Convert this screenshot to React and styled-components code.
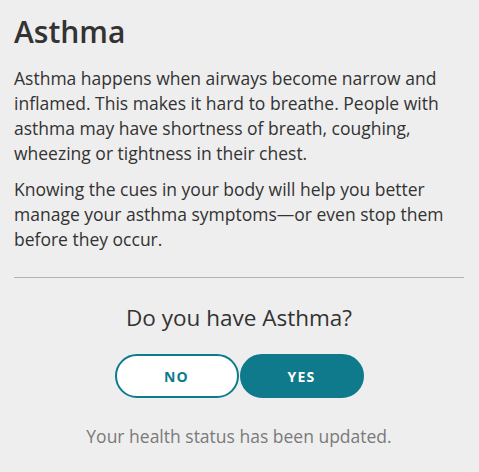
import React, {useState} from 'react'
import styled, {createGlobalStyle} from 'styled-components'

const GlobalStyle = createGlobalStyle`
  html, body {
    margin: 0;
    padding: 0;
    background: #eeeeee;
  }
  body {
    font-family: "Open Sans", "Liberation Sans", sans-serif;
    color: #333333;
  }
`

const App = () => {
  const [answer, setAnswer] = useState('yes')
  return (
    <>
      <GlobalStyle/>
      <Page>
        <Title>Asthma</Title>
        <Paragraph>
          Asthma happens when airways become narrow and inflamed. This makes it hard to breathe. People with
          asthma may have shortness of breath, coughing, wheezing or tightness in their chest.
        </Paragraph>
        <Paragraph>
          Knowing the cues in your body will help you better manage your asthma symptoms—or even stop them
          before they occur.
        </Paragraph>
        <Divider/>
        <Question>Do you have Asthma?</Question>
        <Toggle>
          <Choice active={answer === 'no'} onClick={() => setAnswer('no')}>NO</Choice>
          <Choice active={answer === 'yes'} onClick={() => setAnswer('yes')}>YES</Choice>
        </Toggle>
        <Status>Your health status has been updated.</Status>
      </Page>
    </>
  )
}

export default App

const Page = styled.div`
  width: 479px;
  height: 472px;
  box-sizing: border-box;
  padding: 12px 15px 0 14px;
  display: flex;
  flex-direction: column;
`

const Title = styled.h1`
  margin: 0 0 14px;
  font-size: 30px;
  font-weight: 600;
  line-height: 40px;
  color: #333333;
`

const Paragraph = styled.p`
  margin: 0 0 11px;
  font-size: 17.5px;
  line-height: 25px;
  color: #333333;
`

const Divider = styled.hr`
  margin: 14px 0 0;
  border: none;
  border-top: 1px solid #b3b3b3;
`

const Question = styled.h2`
  margin: 25px 0 0;
  text-align: center;
  font-size: 22.5px;
  font-weight: 400;
  line-height: 30px;
  color: #333333;
`

const Toggle = styled.div`
  display: flex;
  justify-content: center;
  gap: 1px;
  margin-top: 21px;
`

const Choice = styled.button`
  width: 124px;
  height: 44px;
  box-sizing: border-box;
  border-radius: 22px;
  border: 2px solid #0e7a8c;
  background: ${p => p.active ? '#0e7a8c' : '#ffffff'};
  color: ${p => p.active ? '#ffffff' : '#0e7a8c'};
  font-family: "Open Sans", "Liberation Sans", sans-serif;
  font-size: 14px;
  font-weight: 700;
  letter-spacing: 1.2px;
  cursor: pointer;
`

const Status = styled.p`
  margin: 26px 0 0;
  text-align: center;
  font-size: 17.5px;
  line-height: 25px;
  color: #7a7a7a;
`
